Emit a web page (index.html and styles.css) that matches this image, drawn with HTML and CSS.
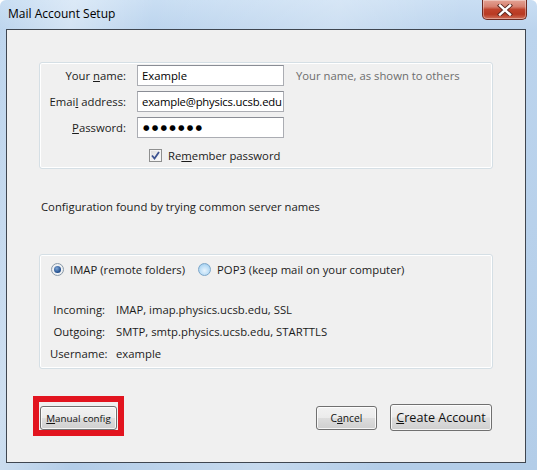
FILE: index.html
```html
<!DOCTYPE html>
<html>
<head>
<meta charset="utf-8">
<link rel="stylesheet" href="styles.css">
</head>
<body>
<div class="window">
  <div class="titlebar">
    <span class="title">Mail Account Setup</span>
    <div class="close">
      <svg width="16" height="12" viewBox="0 0 16 12">
        <path d="M3 1.5 L13 10.5 M13 1.5 L3 10.5" stroke="#5a2a22" stroke-width="4.2" stroke-linecap="square"/>
        <path d="M3 1.5 L13 10.5 M13 1.5 L3 10.5" stroke="#ffffff" stroke-width="2.4" stroke-linecap="square"/>
      </svg>
    </div>
  </div>
  <div class="client">
    <div class="group identity">
      <label class="lbl">Your <u>n</u>ame:</label>
      <div class="field">Example</div>
      <span class="hint">Your name, as shown to others</span>

      <label class="lbl">Emai<u>l</u> address:</label>
      <div class="field clip">example@physics.ucsb.edu</div>
      <span></span>

      <label class="lbl"><u>P</u>assword:</label>
      <div class="field dots">●●●●●●●</div>
      <span></span>

      <span></span>
      <div class="check-row">
        <span class="checkbox">
          <svg width="9" height="9" viewBox="0 0 9 9"><path d="M1 4.5 L3.5 7.5 L8 1" stroke="#3d5391" stroke-width="1.8" fill="none"/></svg>
        </span>
        <span>Re<u>m</u>ember password</span>
      </div>
      <span></span>
    </div>

    <p class="status">Configuration found by trying common server names</p>

    <div class="group servers">
      <div class="radios">
        <span class="radio on"><span class="dot"></span></span>
        <span class="rtext">IMAP (remote folders)</span>
        <span class="radio off"></span>
        <span class="rtext">POP3 (keep mail on your computer)</span>
      </div>
      <div class="info">
        <span class="ilbl">Incoming:</span><span>IMAP, imap.physics.ucsb.edu, SSL</span>
        <span class="ilbl">Outgoing:</span><span>SMTP, smtp.physics.ucsb.edu, STARTTLS</span>
        <span class="ilbl">Username:</span><span>example</span>
      </div>
    </div>

    <div class="buttons">
      <div class="highlight">
        <button class="btn manual"><u>M</u>anual config</button>
      </div>
      <div class="spacer"></div>
      <button class="btn cancel">C<u>a</u>ncel</button>
      <button class="btn create"><u>C</u>reate Account</button>
    </div>
  </div>
</div>
</body>
</html>
```

FILE: styles.css
```css
* { box-sizing: border-box; }
html, body { margin: 0; padding: 0; }
body {
  width: 537px;
  height: 470px;
  overflow: hidden;
  font-family: "Open Sans", "Noto Sans", sans-serif;
  font-size: 11.3px;
  color: #1b1b1b;
}
u { text-decoration: underline; text-underline-offset: 1px; }

.window {
  width: 537px;
  height: 470px;
  padding: 0 11px 7px 6px;
  display: flex;
  flex-direction: column;
  background:
    linear-gradient(100deg, rgba(255,255,255,0.0) 0%, rgba(255,255,255,0.35) 12%, rgba(255,255,255,0.0) 25%, rgba(255,255,255,0.25) 55%, rgba(255,255,255,0) 75%),
    linear-gradient(180deg, #c9def3 0%, #bcd4ed 30px, #b3cde8 100%);
  border-radius: 6px 6px 0 0;
}

.titlebar {
  height: 29px;
  display: flex;
  justify-content: space-between;
  align-items: flex-start;
  padding-left: 2px;
}
.title {
  font-size: 12px;
  color: #000;
  margin-top: 5px;
}
.close {
  width: 45px;
  height: 20px;
  margin-right: -1px;
  border: 1px solid #6b2a22;
  border-top: none;
  border-radius: 0 0 5px 5px;
  background: linear-gradient(180deg, #e4a394 0%, #d6806f 35%, #c0432c 50%, #b83a22 75%, #d0705a 100%);
  box-shadow: inset 0 0 0 1px rgba(255,255,255,0.35);
  display: flex;
  align-items: center;
  justify-content: center;
}

.client {
  flex: 1;
  background: #f0f0f0;
  border: 1px solid #3f4650;
  padding: 0 33px 0 27px;
  display: flex;
  flex-direction: column;
}

.group {
  width: 454px;
  margin-left: 5px;
  border: 1px solid #d5dfe5;
  border-radius: 3px;
  box-shadow: inset 0 0 0 1px #ffffff;
}

.identity {
  margin-top: 32px;
  height: 107px;
  display: grid;
  grid-template-columns: 86px 147px 1fr;
  grid-template-rows: 21px 21px 21px 1fr;
  column-gap: 11px;
  row-gap: 5px;
  padding-top: 2px;
}
.lbl {
  text-align: right;
  align-self: center;
  white-space: nowrap;
}
.field {
  background: #fff;
  border: 1px solid #abadb3;
  border-top-color: #8a8d95;
  height: 21px;
  padding: 0 4px;
  line-height: 19px;
  white-space: nowrap;
  overflow: hidden;
  color: #000;
}
.clip { padding: 0 0 0 4px; letter-spacing: -0.2px; }
.dots {
  font-family: "DejaVu Sans", sans-serif;
  font-size: 7.5px;
  letter-spacing: 2.2px;
  line-height: 19px;
  padding-left: 5px;
}
.hint {
  color: #6d6d6d;
  align-self: center;
  margin-left: 1px;
  white-space: nowrap;
}
.check-row {
  display: flex;
  align-items: center;
  margin-top: 3px;
  margin-left: 12px;
  height: 18px;
  white-space: nowrap;
}
.checkbox {
  width: 13px;
  height: 13px;
  border: 1px solid #8e8f8f;
  background: linear-gradient(135deg, #dcdcdc, #ffffff);
  box-shadow: inset 0 0 0 1px #f4f4f4;
  display: flex;
  align-items: center;
  justify-content: center;
  margin-right: 6px;
}

.status {
  margin: 30px 0 0 7px;
  line-height: 16px;
  height: 16px;
}

.servers {
  margin-top: 39px;
  height: 115px;
  padding: 6px 0 0 11px;
}
.radios {
  display: flex;
  align-items: center;
  height: 16px;
  white-space: nowrap;
}
.radio {
  width: 13px;
  height: 13px;
  border-radius: 50%;
  border: 1px solid #8a9aa8;
  display: flex;
  align-items: center;
  justify-content: center;
  margin-right: 6px;
}
.radio.on { background: radial-gradient(circle, #ffffff, #e3e6ea); }
.radio.on .dot {
  width: 7px; height: 7px; border-radius: 50%;
  background: radial-gradient(circle at 40% 35%, #7fa6d6, #1c4a8a 70%, #16365f);
}
.radio.off {
  margin-left: 13px;
  background: radial-gradient(circle at 50% 60%, #e8f4fd, #b7dbf5 60%, #8cc1e8);
  border-color: #7ca6c9;
}

.info {
  display: grid;
  grid-template-columns: 55px 1fr;
  column-gap: 11px;
  row-gap: 6px;
  margin-top: 25px;
  margin-left: -1px;
  line-height: 16px;
}
.ilbl { text-align: right; }

.buttons {
  margin-top: 27px;
  display: flex;
  align-items: flex-end;
}
.highlight {
  border: 6px solid #e2141f;
  padding: 4px 1px 0 1px;
  margin-left: -1px;
}
.spacer { flex: 1; }
.btn {
  font-family: inherit;
  color: #111;
  border: 1px solid #707070;
  border-radius: 3px;
  background: linear-gradient(180deg, #f2f2f2 0%, #ebebeb 49%, #dddddd 51%, #cfcfcf 100%);
  box-shadow: inset 0 0 0 1px rgba(255,255,255,0.8);
  padding: 0;
  display: block;
  white-space: nowrap;
}
.manual {
  width: 77px;
  height: 24px;
  font-size: 9.8px;
}
.cancel {
  width: 61px;
  height: 24px;
  font-size: 10.3px;
  margin-right: 13px;
  margin-bottom: 6px;
}
.create {
  width: 102px;
  height: 27px;
  font-size: 12.6px;
  margin-bottom: 5px;
}
```
